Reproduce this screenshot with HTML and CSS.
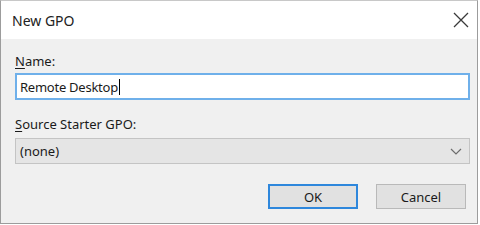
FILE: index.html
```html
<!DOCTYPE html>
<html>
<head>
<meta charset="utf-8">
<link rel="stylesheet" href="styles.css">
</head>
<body>
<div class="window">
  <div class="titlebar">
    <span class="title">New GPO</span>
    <span class="close">
      <svg width="16" height="16" viewBox="0 0 16 16"><path d="M1 1 L15 15 M15 1 L1 15" stroke="#3a3a3a" stroke-width="1.3" fill="none"/></svg>
    </span>
  </div>
  <div class="content">
    <div class="label label-name"><u>N</u>ame:</div>
    <div class="textbox"><span class="value">Remote Desktop</span><span class="caret"></span></div>
    <div class="label label-source"><u>S</u>ource Starter GPO:</div>
    <div class="combo">
      <span>(none)</span>
      <svg class="chev" width="12" height="7" viewBox="0 0 12 7"><path d="M1 1 L6 6 L11 1" stroke="#6d6d6d" stroke-width="1.2" fill="none"/></svg>
    </div>
    <div class="buttons">
      <div class="btn btn-default">OK</div>
      <div class="btn">Cancel</div>
    </div>
  </div>
</div>
</body>
</html>
```
FILE: styles.css
```css
html, body {
  margin: 0;
  padding: 0;
  background: #ffffff;
}
body {
  width: 480px;
  height: 225px;
  font-family: "Noto Sans", "Liberation Sans", sans-serif;
  color: #1a1a1a;
}
.window {
  width: 478px;
  height: 224px;
  box-sizing: border-box;
  border: 1px solid #9c9c9c;
  border-top-color: #c8c8c8;
  display: flex;
  flex-direction: column;
}
.titlebar {
  height: 38px;
  background: #ffffff;
  display: flex;
  align-items: center;
  justify-content: space-between;
  padding: 0 8px 0 11px;
}
.title {
  font-size: 14px;
  color: #222;
}
.close {
  display: flex;
  width: 16px;
  height: 16px;
}
.content {
  flex: 1;
  background: #f0f0f0;
  padding: 13px 7px 0 14px;
  font-size: 13px;
}
.label {
  height: 18px;
  line-height: 18px;
}
.label u {
  text-decoration-thickness: 1px;
  text-underline-offset: 2px;
}
.textbox {
  margin-top: 3px;
  height: 27px;
  box-sizing: border-box;
  border: 2px solid #6fb0ea;
  background: #ffffff;
  display: flex;
  align-items: center;
  padding-left: 3px;
}
.value {
  letter-spacing: -0.25px;
}
.caret {
  width: 1px;
  height: 16px;
  background: #000;
  margin-left: 1px;
}
.label-source {
  margin-top: 15px;
}
.combo {
  margin-top: 5px;
  height: 26px;
  box-sizing: border-box;
  border: 1px solid #c4c4c4;
  background: #e5e5e5;
  display: flex;
  align-items: center;
  justify-content: space-between;
  padding: 0 7px 0 4px;
}
.buttons {
  margin-top: 20px;
  display: flex;
  justify-content: flex-end;
  gap: 18px;
  padding-right: 4px;
}
.btn {
  width: 90px;
  height: 25px;
  box-sizing: border-box;
  border: 1px solid #b9b9b9;
  background: #e1e1e1;
  display: flex;
  align-items: center;
  justify-content: center;
}
.btn-default {
  border: 2px solid #2e87dc;
}
```
